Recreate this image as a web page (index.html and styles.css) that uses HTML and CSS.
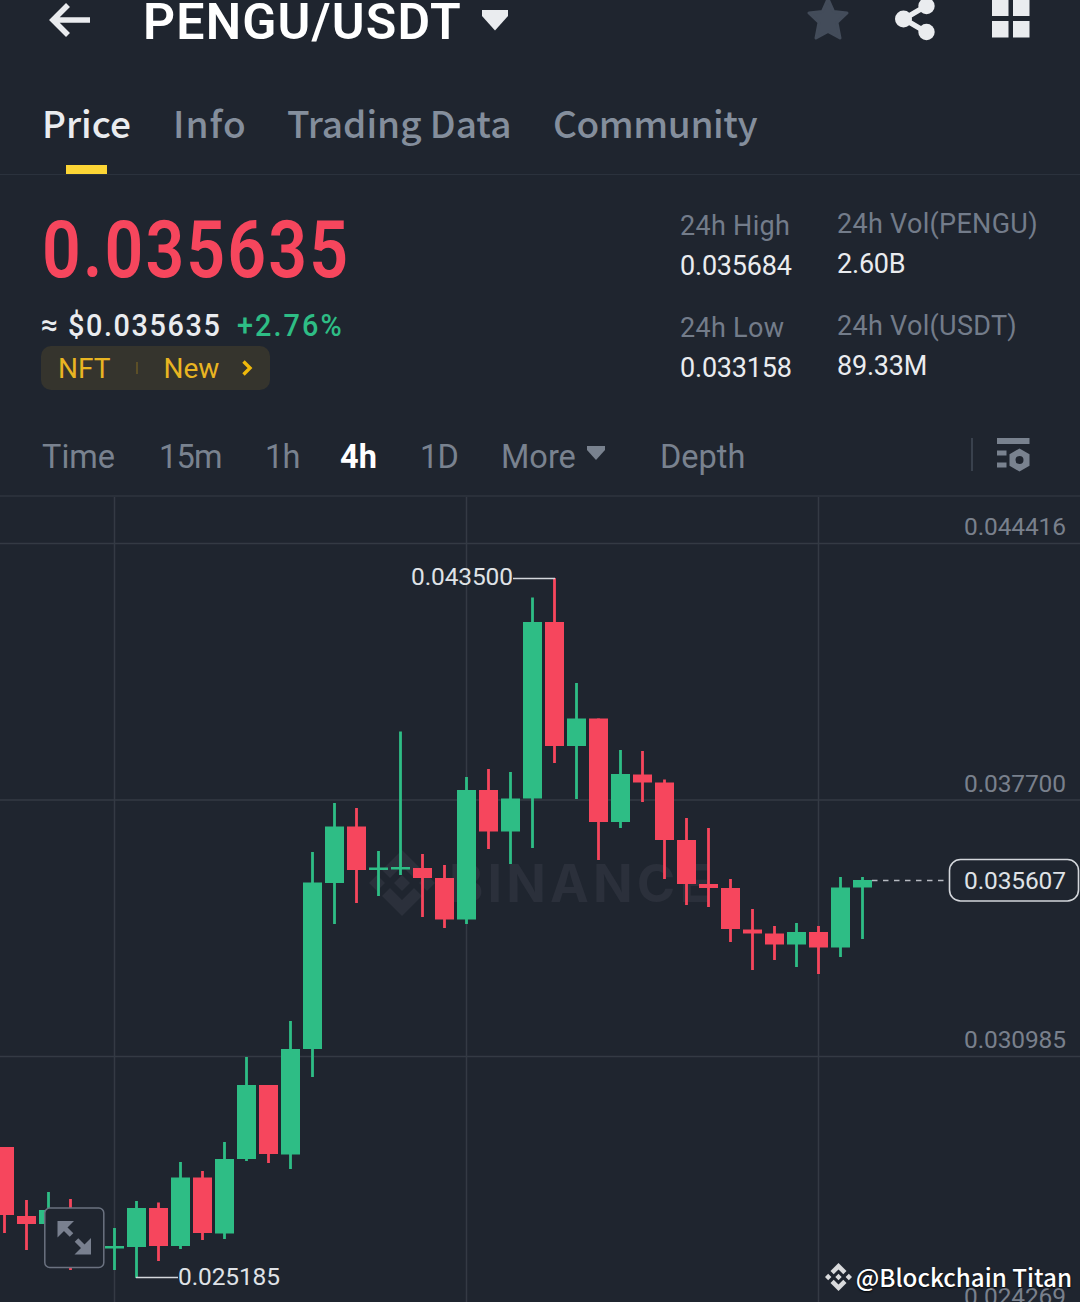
FILE: index.html
```html
<!DOCTYPE html>
<html lang="en">
<head>
    <meta charset="UTF-8">
    <meta name="viewport" content="width=device-width, initial-scale=1.0">
    <title>PENGU/USDT</title>
    <link rel="stylesheet" href="styles.css">
</head>
<body>

    <header class="header">
        <svg class="icon-back" width="42" height="34" viewBox="0 0 42 34" fill="none" stroke="#eaecef" stroke-width="5.6">
            <path d="M41 17H5M19 2L4 17l15 15"/>
        </svg>
        <h1 class="pair">PENGU/USDT</h1>
        <svg class="pair-caret" width="26" height="21" viewBox="0 0 26 21" fill="#eaecef">
            <path d="M0 0h26v6L13 20.500 0 6z"/>
        </svg>
        <div class="header-actions">
            <svg width="42" height="44" viewBox="0 0 42 44" fill="#434c5a" stroke="#434c5a" stroke-width="3" stroke-linejoin="round">
                <path d="M21 2l5.600 12.500 13.400 1.500-10 9.500 3 15.500-12-6.500-12 6.500 3-15.500-10-9.500 13.400-1.500z"/>
            </svg>
            <svg width="40" height="44" viewBox="0 0 40 44" fill="#eaecef">
                <path d="M31 9L9 22l22 13" fill="none" stroke="#eaecef" stroke-width="5.500"/>
                <circle cx="8.500" cy="22" r="8.500"/>
                <circle cx="31.500" cy="9" r="8.200"/>
                <circle cx="31.500" cy="35" r="8.200"/>
            </svg>
            <svg width="38" height="44" viewBox="0 0 38 44" fill="#eaecef">
                <path d="M0 3h16.500v16H0zM21 3h16.500v16H21zM0 24h16.500v16.500H0zM21 24h16.500v16.500H21z"/>
            </svg>
        </div>
    </header>

    <nav class="tabs">
        <a class="tab active">Price</a>
        <a class="tab tab-info">Info</a>
        <a class="tab tab-data">Trading Data</a>
        <a class="tab tab-community">Community</a>
    </nav>

    <section class="ticker">
        <div class="ticker-main">
            <div class="last-price">0.035635</div>
            <div class="sub-price">
                <span class="approx">≈</span>
                <span class="usd">$0.035635</span>
                <span class="change">+2.76%</span>
            </div>
            <div class="tags">
                <span class="tag">NFT</span>
                <span class="tag-divider"></span>
                <span class="tag">New</span>
                <svg class="tag-arrow" width="11" height="16" viewBox="0 0 11 16" fill="none" stroke="#f0b90b" stroke-width="3.400">
                    <path d="M1.500 1.500L8 8l-6.500 6.500"/>
                </svg>
            </div>
        </div>
        <dl class="stats">
            <div class="stat">
                <dt>24h High</dt>
                <dd>0.035684</dd>
            </div>
            <div class="stat">
                <dt>24h Low</dt>
                <dd>0.033158</dd>
            </div>
        </dl>
        <dl class="stats stats-vol">
            <div class="stat">
                <dt>24h Vol(PENGU)</dt>
                <dd>2.60B</dd>
            </div>
            <div class="stat">
                <dt>24h Vol(USDT)</dt>
                <dd>89.33M</dd>
            </div>
        </dl>
    </section>

    <nav class="intervals">
        <a>Time</a>
        <a class="short">15m</a>
        <a class="short">1h</a>
        <a class="active">4h</a>
        <a class="short">1D</a>
        <a>More
            <svg class="more-caret" width="18" height="14" viewBox="0 0 18 14" fill="#79828f"><path d="M0 0h18v4L9 14 0 4z"/></svg>
        </a>
        <a>Depth</a>
        <span class="interval-divider"></span>
        <svg width="33" height="34" viewBox="0 0 33 34" fill="#79828f">
            <path d="M0 0h32.500v6H0zM0 12.500h9.500v5H0zM0 24.500h9.500v5H0z"/>
            <path fill-rule="evenodd" d="M22.500 10.500l10 5.700v11.600l-10 5.700-10-5.700V16.200zM22.500 18a4 4 0 1 0 0 8 4 4 0 0 0 0-8z"/>
        </svg>
    </nav>

    <main class="chart">
        <svg id="chart" width="1080" height="805" viewBox="0 497 1080 805">
            <g class="grid">
                <path d="M0 543.500h1080M0 800h1080M0 1056.500h1080M114.500 497v805M466.500 497v805M818.500 497v805"/>
            </g>
            <g class="brand">
                <path d="M402 850l20 20-8 8-12-12-12 12-8-8zM402 916l-20-20 8-8 12 12 12-12 8 8zM402 875l8 8-8 8-8-8zM377 875l8 8-8 8-8-8zM427 875l8 8-8 8-8-8z"/>
                <text x="449" y="902" textLength="262">BINANCE</text>
            </g>
            <g id="candles"></g>
            <g class="marks">
                <path d="M513 578.500h42M136 1277.500h42"/>
                <path class="last-line" d="M872 880.500h73"/>
                <rect x="949.500" y="859.500" width="129" height="41.500" rx="11"/>
                <text x="411" y="585" textLength="102">0.043500</text>
                <text x="178" y="1285" textLength="102">0.025185</text>
                <text x="964" y="889" textLength="102">0.035607</text>
            </g>
            <g class="axis">
                <text x="964" y="535" textLength="102">0.044416</text>
                <text x="964" y="792" textLength="102">0.037700</text>
                <text x="964" y="1048" textLength="102">0.030985</text>
                <text x="964" y="1305" textLength="102">0.024269</text>
            </g>
            <g class="expand">
                <rect x="44.800" y="1208" width="59" height="59.500" rx="5"/>
                <path d="M57.500 1221h16.500l-16.500 16.500zM91 1254.500H74.500L91 1238z"/>
                <path class="shaft" d="M62 1225.500l9.500 9.500M86.500 1250l-10-10"/>
            </g>
        </svg>
        <div class="credit">
            <svg width="27" height="28" viewBox="0 0 27 28" fill="#d9dadc">
                <path d="M13.500 0l8 8-3.200 3.200-4.800-4.800-4.800 4.800L5.500 8zM13.500 28l-8-8 3.200-3.200 4.800 4.800 4.800-4.800 3.200 3.200zM13.500 10.800l3.200 3.200-3.200 3.200-3.200-3.200zM3.200 10.800L6.400 14l-3.200 3.200L0 14zM23.800 10.800L27 14l-3.200 3.200-3.200-3.200z"/>
            </svg>
            <span>@Blockchain Titan</span>
        </div>
    </main>

    <script src="chart.js"></script>
</body>
</html>
```

FILE: styles.css
```css
* {
    box-sizing: border-box;
}

body {
    margin: 0;
    width: 1080px;
    height: 1302px;
    overflow: hidden;
    background-color: #1f252f;
    color: #eaecef;
    font-family: Roboto, "Liberation Sans", sans-serif;
}

svg {
    display: block;
    flex: none;
}

/* header */
.header {
    display: flex;
    align-items: center;
    height: 40px;
    padding: 0 50px 0 49px;
}

.pair {
    margin: 3px 0 0 52px;
    width: 339px;
    font-size: 50px;
    line-height: 42px;
    font-weight: 600;
    letter-spacing: 1.2px;
    color: #fff;
}

.header-actions {
    display: flex;
    gap: 57px;
    margin: -2px 0 0 auto;
    align-items: center;
}

.header-actions svg:first-child {
    margin-right: -11px;
}

/* tabs */
.tabs {
    display: grid;
    grid-template-columns: 131px 114px 266px 1fr;
    height: 135px;
    padding: 0 42px;
    border-bottom: 1px solid #2b323d;
    font-family: "Noto Sans CJK SC", "Noto Sans", sans-serif;
    font-size: 37px;
    font-weight: 500;
    color: #848e9c;
}

.tab {
    display: flex;
    flex-direction: column;
    justify-content: space-between;
    padding-top: 56px;
    line-height: 53px;
    white-space: nowrap;
}

.tab-info {
    letter-spacing: 1px;
}

.tab-community {
    letter-spacing: -0.4px;
}

.tab.active {
    color: #eaecef;
}

.tab.active::after {
    content: "";
    width: 41px;
    height: 9px;
    margin-left: 24px;
    background-color: #fcd535;
}

/* ticker */
.ticker {
    display: flex;
    height: 243px;
    padding-left: 41px;
}

.ticker-main {
    width: 639px;
    padding-top: 34px;
}

.last-price {
    margin-left: 1px;
    font-size: 79px;
    line-height: 82px;
    height: 80px;
    font-weight: 600;
    letter-spacing: 2.500px;
    transform: scaleX(0.86);
    transform-origin: left;
    color: #f6465d;
}

.sub-price {
    display: flex;
    height: 57px;
    line-height: 72px;
    font-size: 32px;
    font-weight: 500;
}

.approx {
    width: 27px;
    font-size: 30px;
}

.usd,
.change {
    letter-spacing: 1.800px;
    transform: scaleX(0.9);
    transform-origin: left;
}

.usd {
    width: 169px;
}

.change {
    letter-spacing: 2.300px;
    color: #2ebd85;
}

.tags {
    display: flex;
    align-items: center;
    width: 229px;
    height: 44px;
    padding: 0 17px;
    border-radius: 10px;
    background-color: #35342d;
    color: #e9b522;
    font-size: 28px;
}

.tag-divider {
    width: 2px;
    height: 12px;
    margin: 0 25px 0 26px;
    background-color: #5c4f27;
}

.tag-arrow {
    margin-left: auto;
}

.stats {
    width: 157px;
    margin: 0;
    padding-top: 31px;
    font-size: 27px;
    white-space: nowrap;
}

.stats-vol {
    padding-top: 29px;
}

.stat {
    height: 102px;
    line-height: 40px;
}

.stat dt {
    letter-spacing: 0.3px;
    color: #737c8a;
}

.stat dd {
    margin: 0;
    letter-spacing: -0.2px;
    color: #eaecef;
}

/* intervals */
.intervals {
    display: grid;
    grid-template-columns: 117px 106px 75px 80px 81px 159px 311px 26px 33px;
    align-items: center;
    height: 79px;
    padding: 0 0 4px 42px;
    border-bottom: 2px solid #2a303a;
    font-size: 32.500px;
    color: #79828f;
}

.intervals a {
    padding-top: 4px;
}

.intervals .short {
    letter-spacing: -0.8px;
}

.intervals .active {
    color: #fff;
    font-weight: 700;
}

.more-caret {
    display: inline-block;
    margin-left: 3px;
    vertical-align: 8px;
}

.interval-divider {
    width: 2px;
    height: 33px;
    background-color: #39414d;
}

/* chart */
.chart {
    position: relative;
}

.grid path {
    stroke: #343a44;
    stroke-width: 1.500;
}

.brand {
    fill: #2b303b;
}

.brand text {
    font-family: Inter, sans-serif;
    font-size: 52px;
    font-weight: 700;
}

.up {
    fill: #2ebd85;
}

.down {
    fill: #f6465d;
}

.marks text,
.axis text {
    font-size: 24.500px;
}

.marks text {
    fill: #dfe2e6;
}

.axis text {
    fill: #79808c;
}

.marks path,
.marks rect {
    fill: none;
    stroke: #d3d6db;
    stroke-width: 1.600;
}

.marks .last-line {
    stroke: #b6bac1;
    stroke-dasharray: 5.500 5.500;
}

.expand rect {
    fill: #1f252f;
    stroke: #6b7280;
    stroke-width: 1.500;
}

.expand path {
    fill: #79808f;
}

.expand .shaft {
    fill: none;
    stroke: #79808f;
    stroke-width: 5;
}

.credit {
    position: absolute;
    right: 8px;
    bottom: 4px;
    display: flex;
    align-items: center;
    gap: 4px;
    font-family: "Noto Sans CJK SC", "Noto Sans", sans-serif;
    font-size: 24.200px;
    line-height: 42px;
    font-weight: 500;
    color: #fff;
    text-shadow: 0 1px 2px #000;
}
```

FILE: chart.js
```js
// [direction, high, body top, body bottom, low]
const candles = [
    ['down', 1147, 1147, 1215, 1233],
    ['down', 1200, 1216, 1224, 1250],
    ['up', 1192, 1210, 1224, 1240],
    ['down', 1199, 1212, 1240, 1270],
    ['down', 1225, 1240, 1248, 1260],
    ['up', 1228, 1246, 1248.5, 1270],
    ['up', 1201, 1208, 1247, 1278],
    ['down', 1202.5, 1208, 1246, 1261],
    ['up', 1162, 1177.5, 1246, 1249],
    ['down', 1171, 1177.5, 1233, 1240],
    ['up', 1142, 1159, 1233.5, 1239],
    ['up', 1057, 1085, 1159, 1161],
    ['down', 1085, 1085, 1154, 1163],
    ['up', 1021, 1049, 1154.5, 1169],
    ['up', 852, 882.5, 1049, 1077],
    ['up', 803, 826.5, 883, 924],
    ['down', 808, 826.5, 870, 903],
    ['up', 851, 867.5, 870, 896],
    ['up', 731.5, 867, 869.5, 875],
    ['down', 854, 868, 878, 917],
    ['down', 865, 878, 919.5, 928],
    ['up', 777, 790, 919.5, 924],
    ['down', 769, 790, 831.5, 849],
    ['up', 772, 798.5, 831.5, 864],
    ['up', 597.5, 622, 798.5, 848],
    ['down', 578, 622, 746, 763],
    ['up', 683, 718.5, 746, 799],
    ['down', 718.5, 718.5, 822, 860],
    ['up', 750, 774, 822, 828],
    ['down', 751, 774.5, 782.5, 802],
    ['down', 779.5, 782.5, 840, 879],
    ['down', 818, 840, 884, 905],
    ['down', 828, 884, 888, 907],
    ['down', 879, 888, 929, 942],
    ['down', 909, 929.5, 933.5, 970],
    ['down', 926, 933.5, 944.5, 960],
    ['up', 923, 932, 944.5, 967],
    ['down', 926, 932, 947.5, 974],
    ['up', 877, 887.5, 947.5, 957],
    ['up', 877, 880, 887.5, 939]
];

const group = document.getElementById('candles');

function addRect(cls, x, y, width, height) {
    const rect = document.createElementNS('http://www.w3.org/2000/svg', 'rect');
    rect.setAttribute('class', cls);
    rect.setAttribute('x', x);
    rect.setAttribute('y', y);
    rect.setAttribute('width', width);
    rect.setAttribute('height', height);
    group.appendChild(rect);
}

candles.forEach(function (candle, i) {
    const [dir, high, top, bottom, low] = candle;
    const x = 4.5 + i * 22;
    addRect(dir, x - 1.4, high, 2.8, low - high);
    addRect(dir, x - 9.5, top, 19, bottom - top);
});
```
